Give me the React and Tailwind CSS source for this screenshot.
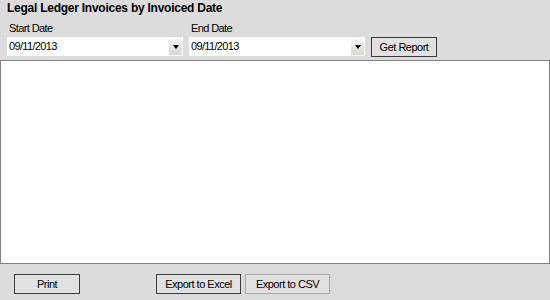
import React from 'react';

const DateBox = ({ label, value }) => (
  <div className="flex flex-col w-[176px]">
    <label className="text-[11px] leading-[13px] pl-[2px] text-black tracking-[-0.6px]">{label}</label>
    <div className="mt-[2px] h-[19px] bg-white flex items-center justify-between pl-[2px] pr-[1px]">
      <span className="text-[11px] text-black tracking-[-0.65px]">{value}</span>
      <div className="w-[13px] h-[16px] bg-gradient-to-b from-[#f4f4f4] to-[#d8d8d0] flex items-center justify-center">
        <div className="w-0 h-0 border-l-[3.5px] border-r-[3.5px] border-t-[4px] border-l-transparent border-r-transparent border-t-black" />
      </div>
    </div>
  </div>
);

const Btn = ({ children, className = '', dark = true }) => (
  <button
    className={`h-[20px] text-[11px] tracking-[-0.5px] text-black bg-[#e1e1e1] border ${dark ? 'border-[#3c3c3c]' : 'border-[#a8a8a8]'} ${className}`}
  >
    {children}
  </button>
);

export default function App() {
  return (
    <div className="w-[550px] h-[300px] bg-[#dcdcdc] overflow-hidden" style={{ fontFamily: '"Liberation Sans", Arial, sans-serif' }}>
      <h1 className="text-[12px] leading-[14px] font-bold pl-[7px] pt-[1px] text-black tracking-[-0.25px]">
        Legal Ledger Invoices by Invoiced Date
      </h1>

      <div className="flex items-end pl-[7px] mt-[7px] gap-[6px]">
        <DateBox label="Start Date" value="09/11/2013" />
        <DateBox label="End Date" value="09/11/2013" />
        <Btn className="w-[66px] mb-[-1px]">Get Report</Btn>
      </div>

      <div className="mt-[4px] h-[204px] bg-white border border-[#828282]" />

      <div className="flex pl-[14px] mt-[10px]">
        <Btn className="w-[66px]">Print</Btn>
        <Btn className="w-[85px] ml-[76px]">Export to Excel</Btn>
        <Btn className="w-[85px] ml-[4px]" dark={false}>Export to CSV</Btn>
      </div>
    </div>
  );
}
